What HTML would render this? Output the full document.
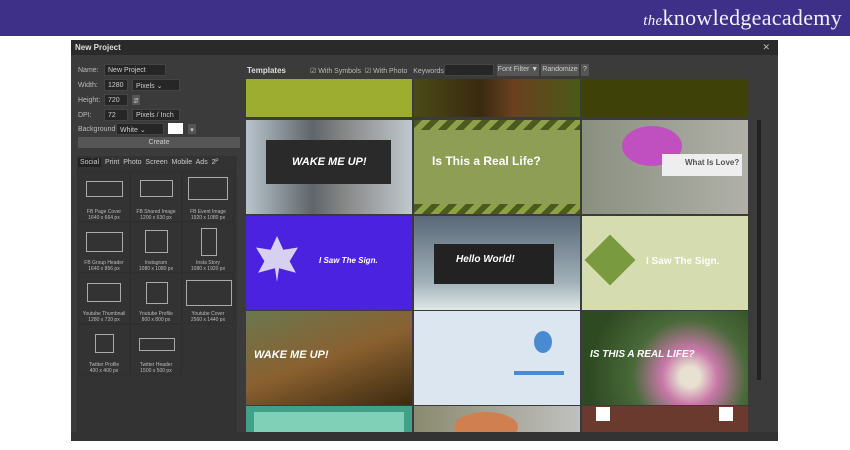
<!DOCTYPE html>
<html><head><style>
*{margin:0;padding:0;box-sizing:border-box}
body{width:850px;height:450px;background:#fff;position:relative;overflow:hidden;font-family:"Liberation Sans",sans-serif}
.hdr{position:absolute;left:0;top:0;width:850px;height:36px;background:#3e2f88}
.logo{position:absolute;right:8px;top:5px;color:#f2f0f8;font-family:"Liberation Serif",serif;font-size:22px;letter-spacing:0.3px}
.logo i{font-size:15px}
.dlg{position:absolute;left:71px;top:40px;width:707px;height:401px;background:#3b3b3b}
.tb{height:15px;background:#2a2a2a;color:#ddd;font-size:8px;font-weight:bold;padding:3px 4px}
.x{position:absolute;right:8px;top:2px;color:#bbb;font-size:9px}
.lab{position:absolute;color:#bbb;font-size:7px}
.inp{position:absolute;background:#262626;color:#ccc;font-size:7px;padding:2px 3px;border:1px solid #444}
.btn{position:absolute;background:#555;color:#ccc;font-size:7px;text-align:center;padding-top:2px}
.cell{position:absolute;width:52px;height:51px;border:1px solid #2f2f2f;background:#333}
.cell div{position:absolute;border:1px solid #aaa}
.cell p{position:absolute;width:100%;text-align:center;color:#bbb;font-size:5px;top:37px;line-height:6px}
.t{position:absolute;overflow:hidden}
.tt{position:absolute;color:#fff;font-weight:bold;font-style:italic}
</style></head><body>
<div class="hdr"><div class="logo"><i>the</i>knowledgeacademy</div></div>
<div class="dlg">
<div class="tb">New Project</div><div class="x">✕</div>
<div class="lab" style="left:7px;top:27px">Name:</div><div class="inp" style="left:33px;top:24px;width:62px;height:12px">New Project</div>
<div class="lab" style="left:7px;top:42px">Width:</div><div class="inp" style="left:33px;top:39px;width:24px;height:12px">1280</div><div class="inp" style="left:61px;top:39px;width:48px;height:12px">Pixels ⌄</div>
<div class="lab" style="left:7px;top:57px">Height:</div><div class="inp" style="left:33px;top:54px;width:24px;height:12px">720</div><div class="btn" style="left:61px;top:55px;width:8px;height:10px">⇵</div>
<div class="lab" style="left:7px;top:72px">DPI:</div><div class="inp" style="left:33px;top:69px;width:24px;height:12px">72</div><div class="inp" style="left:61px;top:69px;width:48px;height:12px">Pixels / Inch ⌄</div>
<div class="lab" style="left:7px;top:86px">Background:</div><div class="inp" style="left:45px;top:83px;width:48px;height:12px">White ⌄</div><div style="position:absolute;left:97px;top:83px;width:15px;height:11px;background:#fff"></div><div class="btn" style="left:117px;top:84px;width:8px;height:10px">▾</div>
<div class="btn" style="left:7px;top:97px;width:162px;height:11px">Create</div>
<div style="position:absolute;left:6px;top:116px;width:160px;height:285px;background:#333"></div>
<div class="lab" style="left:7px;top:119px;font-size:7px;color:#ccc"><span style="background:#222;padding:1px 2px">Social</span>&nbsp; Print&nbsp; Photo&nbsp; Screen&nbsp; Mobile&nbsp; Ads&nbsp; 2ᴾ</div>
<div class="cell" style="left:7px;top:131px"><div style="left:7px;top:9px;width:37px;height:16px"></div><p>FB Page Cover<br>1640 x 664 px</p></div>
<div class="cell" style="left:59px;top:131px"><div style="left:9px;top:8px;width:33px;height:17px"></div><p>FB Shared Image<br>1200 x 630 px</p></div>
<div class="cell" style="left:111px;top:131px"><div style="left:5px;top:5px;width:40px;height:23px"></div><p>FB Event Image<br>1920 x 1080 px</p></div>
<div class="cell" style="left:7px;top:182px"><div style="left:7px;top:9px;width:37px;height:20px"></div><p>FB Group Header<br>1640 x 856 px</p></div>
<div class="cell" style="left:59px;top:182px"><div style="left:14px;top:7px;width:23px;height:23px"></div><p>Instagram<br>1080 x 1080 px</p></div>
<div class="cell" style="left:111px;top:182px"><div style="left:18px;top:5px;width:16px;height:28px"></div><p>Insta Story<br>1080 x 1920 px</p></div>
<div class="cell" style="left:7px;top:233px"><div style="left:8px;top:9px;width:34px;height:19px"></div><p>Youtube Thumbnail<br>1280 x 720 px</p></div>
<div class="cell" style="left:59px;top:233px"><div style="left:15px;top:8px;width:22px;height:22px"></div><p>Youtube Profile<br>800 x 800 px</p></div>
<div class="cell" style="left:111px;top:233px"><div style="left:3px;top:6px;width:46px;height:26px"></div><p>Youtube Cover<br>2560 x 1440 px</p></div>
<div class="cell" style="left:7px;top:284px"><div style="left:16px;top:9px;width:19px;height:19px"></div><p>Twitter Profile<br>400 x 400 px</p></div>
<div class="cell" style="left:59px;top:284px"><div style="left:8px;top:13px;width:36px;height:13px"></div><p>Twitter Header<br>1500 x 500 px</p></div>
<div class="lab" style="left:176px;top:26px;font-size:8px;font-weight:bold;color:#ddd">Templates</div>
<div class="lab" style="left:239px;top:27px;color:#bbb">☑ With Symbols &nbsp;☑ With Photo &nbsp; Keywords:</div>
<div class="inp" style="left:373px;top:24px;width:50px;height:12px"></div>
<div class="btn" style="left:426px;top:24px;width:42px;height:12px">Font Filter ▼</div>
<div class="btn" style="left:470px;top:24px;width:38px;height:12px">Randomize</div>
<div class="btn" style="left:510px;top:24px;width:8px;height:12px">?</div>
<div class="t" style="left:175px;top:39px;width:166px;height:38px;background:#9cad2f"></div>
<div class="t" style="left:343px;top:39px;width:166px;height:38px;background:linear-gradient(90deg,#4a4a18,#3a2a10 40%,#6a4020 60%,#4a5a18)"></div>
<div class="t" style="left:511px;top:39px;width:166px;height:38px;background:#3e4208"></div>
<div class="t" style="left:175px;top:80px;width:166px;height:94px;background:linear-gradient(90deg,#b8c4cc,#60656a 40%,#888 60%,#c0c8cc)"><div style="position:absolute;left:20px;top:20px;width:125px;height:44px;background:#2a2a2a"></div><div class="tt" style="left:46px;top:36px;font-size:11px">WAKE ME UP!</div></div>
<div class="t" style="left:343px;top:80px;width:166px;height:94px;background:repeating-linear-gradient(135deg,#4c5a20 0 6px,#8ea04a 6px 12px)"><div style="position:absolute;left:0;top:10px;width:166px;height:74px;background:#8e9f55"></div><div class="tt" style="left:18px;top:34px;font-size:12px;font-style:normal">Is This a Real Life?</div></div>
<div class="t" style="left:511px;top:80px;width:166px;height:94px;background:linear-gradient(90deg,#8a9080,#b0b0a8)"><div style="position:absolute;left:40px;top:6px;width:60px;height:40px;background:#c050c0;border-radius:50%"></div><div style="position:absolute;left:80px;top:34px;width:80px;height:22px;background:#eee"></div><div class="tt" style="left:103px;top:38px;font-size:8px;color:#555;font-style:normal">What Is Love?</div></div>
<div class="t" style="left:175px;top:176px;width:166px;height:94px;background:#4a22e0"><div style="position:absolute;left:10px;top:20px;width:42px;height:46px;background:#d8d0f0;clip-path:polygon(50% 0,65% 30%,100% 25%,80% 55%,95% 80%,55% 70%,50% 100%,45% 70%,5% 80%,20% 55%,0 25%,35% 30%)"></div><div class="tt" style="left:73px;top:40px;font-size:8px">I Saw The Sign.</div></div>
<div class="t" style="left:343px;top:176px;width:166px;height:94px;background:linear-gradient(#5a6878,#a0b0b8 70%,#e0e8e8)"><div style="position:absolute;left:20px;top:28px;width:120px;height:40px;background:#222"></div><div class="tt" style="left:42px;top:38px;font-size:10px">Hello World!</div></div>
<div class="t" style="left:511px;top:176px;width:166px;height:94px;background:#d4dcb0"><div style="position:absolute;left:10px;top:26px;width:36px;height:36px;background:#7a9a40;transform:rotate(45deg)"></div><div class="tt" style="left:64px;top:40px;font-size:10px;font-style:normal">I Saw The Sign.</div></div>
<div class="t" style="left:175px;top:271px;width:166px;height:94px;background:linear-gradient(160deg,#6a7850,#8a6030 50%,#3a2a10)"><div class="tt" style="left:8px;top:38px;font-size:11px">WAKE ME UP!</div></div>
<div class="t" style="left:343px;top:271px;width:166px;height:94px;background:#dce6f0"><div style="position:absolute;left:120px;top:20px;width:18px;height:22px;background:#4a8ad0;border-radius:50%"></div><div style="position:absolute;left:100px;top:60px;width:50px;height:4px;background:#4a8ad0"></div></div>
<div class="t" style="left:511px;top:271px;width:166px;height:94px;background:radial-gradient(circle at 65% 70%,#e8e0d0 8%,#c878a8 22%,#4a6a3a 45%,#2e4a22 80%)"><div class="tt" style="left:8px;top:38px;font-size:10px">IS THIS A REAL LIFE?</div></div>
<div class="t" style="left:175px;top:366px;width:166px;height:26px;background:#40a088"><div style="position:absolute;left:8px;top:6px;width:150px;height:20px;background:#80d0b8"></div></div>
<div class="t" style="left:343px;top:366px;width:166px;height:26px;background:linear-gradient(90deg,#8a8a70,#c0c0c0)"><div style="position:absolute;left:40px;top:6px;width:64px;height:30px;background:#d08050;border-radius:50%"></div></div>
<div class="t" style="left:511px;top:366px;width:166px;height:26px;background:#6a3a2e"><div style="position:absolute;left:14px;top:1px;width:14px;height:14px;background:#fff"></div><div style="position:absolute;left:137px;top:1px;width:14px;height:14px;background:#fff"></div></div>
<div style="position:absolute;left:686px;top:80px;width:4px;height:260px;background:#222"></div>
<div style="position:absolute;left:0;top:392px;width:707px;height:9px;background:#333"></div>
</div>
</body></html>
